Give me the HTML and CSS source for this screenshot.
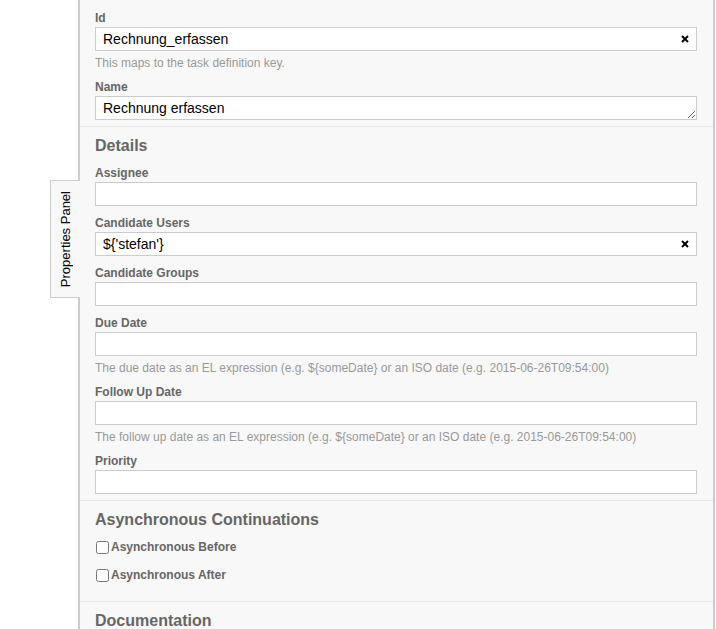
FILE: index.html
```html
<!DOCTYPE html>
<html>
<head>
	<title>Properties Panel</title>
	<link rel="stylesheet" href="styles.css">
</head>
<body>
	<div class="panel-tab"><span>Properties Panel</span></div>

	<div class="panel">
		<div class="group first">
			<div class="entry">
				<label class="entry-label" for="id">Id</label>
				<div class="field">
					<input type="text" id="id" class="entry-input" value="Rechnung_erfassen">
					<span class="clear"><svg width="8" height="8" viewBox="0 0 8 8"><path d="M1 1L7 7M7 1L1 7" stroke="#000" stroke-width="2"/></svg></span>
				</div>
				<div class="description">This maps to the task definition key.</div>
			</div>
			<div class="entry">
				<label class="entry-label" for="name">Name</label>
				<textarea id="name" class="entry-input entry-text">Rechnung erfassen</textarea>
			</div>
		</div>

		<div class="group">
			<div class="group-heading">Details</div>
			<div class="entry">
				<label class="entry-label" for="assignee">Assignee</label>
				<input type="text" id="assignee" class="entry-input">
			</div>
			<div class="entry">
				<label class="entry-label" for="users">Candidate Users</label>
				<div class="field">
					<input type="text" id="users" class="entry-input" value="${'stefan'}">
					<span class="clear"><svg width="8" height="8" viewBox="0 0 8 8"><path d="M1 1L7 7M7 1L1 7" stroke="#000" stroke-width="2"/></svg></span>
				</div>
			</div>
			<div class="entry">
				<label class="entry-label" for="groups">Candidate Groups</label>
				<input type="text" id="groups" class="entry-input">
			</div>
			<div class="entry">
				<label class="entry-label" for="due">Due Date</label>
				<input type="text" id="due" class="entry-input">
				<div class="description">The due date as an EL expression (e.g. ${someDate} or an ISO date (e.g. 2015-06-26T09:54:00)</div>
			</div>
			<div class="entry">
				<label class="entry-label" for="follow">Follow Up Date</label>
				<input type="text" id="follow" class="entry-input">
				<div class="description">The follow up date as an EL expression (e.g. ${someDate} or an ISO date (e.g. 2015-06-26T09:54:00)</div>
			</div>
			<div class="entry">
				<label class="entry-label" for="priority">Priority</label>
				<input type="text" id="priority" class="entry-input">
			</div>
		</div>

		<div class="group">
			<div class="group-heading">Asynchronous Continuations</div>
			<div class="checks">
				<label class="check"><input type="checkbox"> Asynchronous Before</label>
				<label class="check"><input type="checkbox"> Asynchronous After</label>
			</div>
		</div>

		<div class="group">
			<div class="group-heading">Documentation</div>
			<div class="entry">
				<label class="entry-label" for="doc">Element Documentation</label>
				<textarea id="doc" class="entry-input entry-text"></textarea>
			</div>
		</div>
	</div>
</body>
</html>
```

FILE: styles.css
```css
body {
	margin: 0;
	background-color: #fff;
	font-family: "Liberation Sans", Arial, sans-serif;
	overflow: hidden;
}
.panel {
	margin-left: 78px;
	margin-right: 1px;
	min-height: 700px;
	background-color: #f8f8f8;
	border-left: 2px solid #ccc;
	border-right: 2px solid #ccc;
}
.panel-tab {
	position: absolute;
	left: 50px;
	top: 180px;
	width: 29px;
	height: 116px;
	background-color: #f8f8f8;
	border: 1px solid #ccc;
	border-right: none;
	display: flex;
	align-items: center;
	justify-content: center;
}
.panel-tab span {
	writing-mode: vertical-rl;
	transform: rotate(180deg);
	font-size: 13px;
	color: #000;
}
.group {
	border-top: 1px solid #e6e6e6;
	padding: 8px 16px 6px 15px;
}
.group.first {
	border-top: none;
	padding-top: 1px;
}
.group-heading {
	font-size: 16px;
	line-height: 20px;
	padding-top: 1px;
	font-weight: bold;
	color: #666;
}
.entry {
	margin-top: 8px;
}
.entry-label {
	display: block;
	font-size: 12px;
	line-height: 16px;
	padding-top: 1px;
	font-weight: bold;
	color: #666;
	margin-bottom: 1px;
}
.field {
	position: relative;
}
.entry-input {
	display: block;
	box-sizing: border-box;
	width: 100%;
	height: 24px;
	margin: 0;
	padding: 0 7px;
	border: 1px solid #ccc;
	background-color: #fff;
	font-family: "Liberation Sans", Arial, sans-serif;
	font-size: 14px;
	color: #000;
	outline: none;
}
.entry-text {
	resize: vertical;
	padding-top: 2px;
	line-height: 18px;
	overflow: hidden;
}
.clear {
	position: absolute;
	right: 8px;
	top: 8px;
	width: 8px;
	height: 8px;
	display: flex;
}
.description {
	margin-top: 5px;
	font-size: 12px;
	line-height: 14px;
	color: #999;
}
.checks {
	display: flex;
	flex-direction: column;
	gap: 12px;
	padding: 9px 0 12px;
}
.check {
	display: flex;
	align-items: center;
	font-size: 12px;
	line-height: 16px;
	font-weight: bold;
	color: #666;
}
.check input {
	width: 13px;
	height: 13px;
	margin: 0 2px 0 1px;
}
```
